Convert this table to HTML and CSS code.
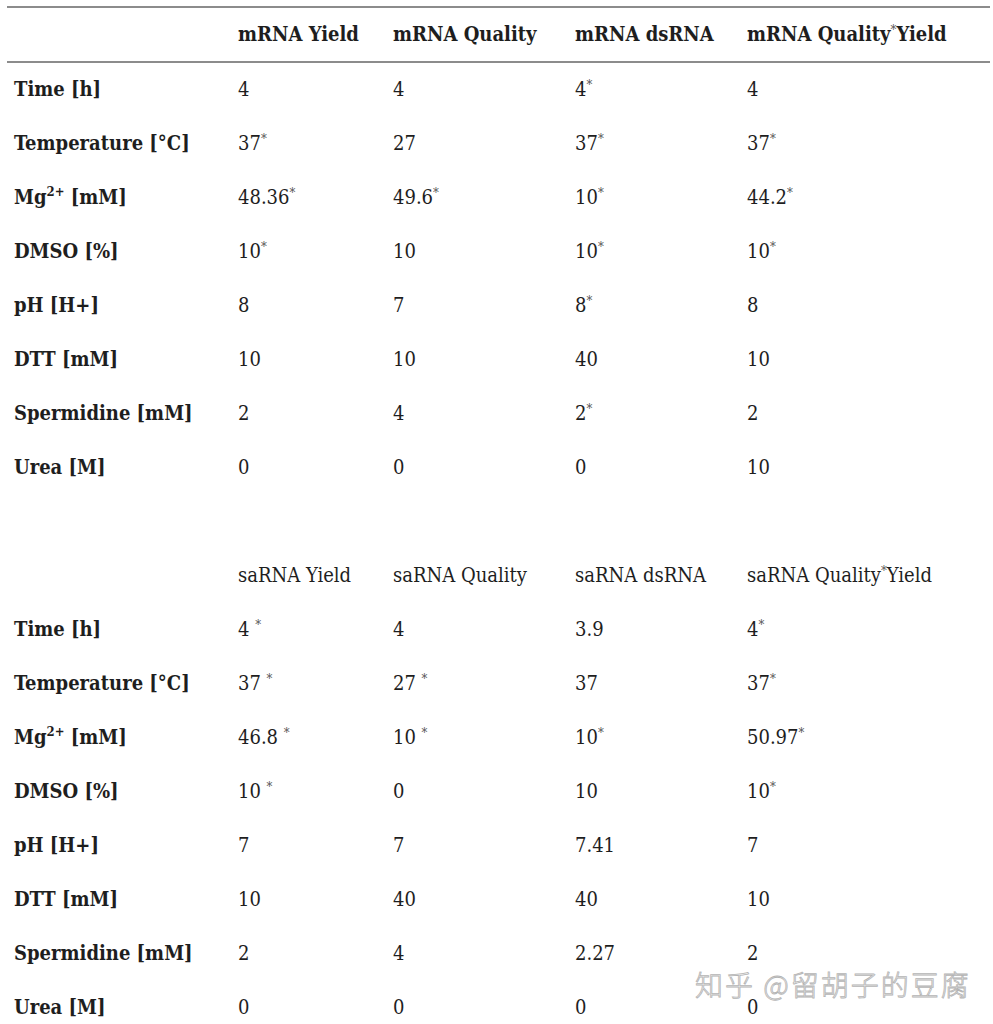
FILE: index.html
```html
<!DOCTYPE html>
<html lang="en">
<head>
<meta charset="utf-8">
<title>Table</title>
<link rel="stylesheet" href="styles.css">
</head>
<body>
<div class="page">
<table class="data lined">
  <colgroup>
    <col class="c0"><col class="c1"><col class="c2"><col class="c3"><col class="c4">
  </colgroup>
  <thead>
    <tr><th></th><th>mRNA Yield</th><th>mRNA Quality</th><th>mRNA dsRNA</th><th>mRNA Quality<sup class="ast">*</sup>Yield</th></tr>
  </thead>
  <tbody>
    <tr><th>Time [h]</th><td>4</td><td>4</td><td>4<sup class="ast">*</sup></td><td>4</td></tr>
    <tr><th>Temperature [°C]</th><td>37<sup class="ast">*</sup></td><td>27</td><td>37<sup class="ast">*</sup></td><td>37<sup class="ast">*</sup></td></tr>
    <tr><th>Mg<sup class="ion">2+</sup> [mM]</th><td>48.36<sup class="ast">*</sup></td><td>49.6<sup class="ast">*</sup></td><td>10<sup class="ast">*</sup></td><td>44.2<sup class="ast">*</sup></td></tr>
    <tr><th>DMSO [%]</th><td>10<sup class="ast">*</sup></td><td>10</td><td>10<sup class="ast">*</sup></td><td>10<sup class="ast">*</sup></td></tr>
    <tr><th>pH [H+]</th><td>8</td><td>7</td><td>8<sup class="ast">*</sup></td><td>8</td></tr>
    <tr><th>DTT [mM]</th><td>10</td><td>10</td><td>40</td><td>10</td></tr>
    <tr><th>Spermidine [mM]</th><td>2</td><td>4</td><td>2<sup class="ast">*</sup></td><td>2</td></tr>
    <tr><th>Urea [M]</th><td>0</td><td>0</td><td>0</td><td>10</td></tr>
  </tbody>
</table>

<table class="data plain">
  <colgroup>
    <col class="c0"><col class="c1"><col class="c2"><col class="c3"><col class="c4">
  </colgroup>
  <thead>
    <tr><th></th><th>saRNA Yield</th><th>saRNA Quality</th><th>saRNA dsRNA</th><th>saRNA Quality<sup class="ast">*</sup>Yield</th></tr>
  </thead>
  <tbody>
    <tr><th>Time [h]</th><td>4 <sup class="ast">*</sup></td><td>4</td><td>3.9</td><td>4<sup class="ast">*</sup></td></tr>
    <tr><th>Temperature [°C]</th><td>37 <sup class="ast">*</sup></td><td>27 <sup class="ast">*</sup></td><td>37</td><td>37<sup class="ast">*</sup></td></tr>
    <tr><th>Mg<sup class="ion">2+</sup> [mM]</th><td>46.8 <sup class="ast">*</sup></td><td>10 <sup class="ast">*</sup></td><td>10<sup class="ast">*</sup></td><td>50.97<sup class="ast">*</sup></td></tr>
    <tr><th>DMSO [%]</th><td>10 <sup class="ast">*</sup></td><td>0</td><td>10</td><td>10<sup class="ast">*</sup></td></tr>
    <tr><th>pH [H+]</th><td>7</td><td>7</td><td>7.41</td><td>7</td></tr>
    <tr><th>DTT [mM]</th><td>10</td><td>40</td><td>40</td><td>10</td></tr>
    <tr><th>Spermidine [mM]</th><td>2</td><td>4</td><td>2.27</td><td>2</td></tr>
    <tr><th>Urea [M]</th><td>0</td><td>0</td><td>0</td><td>0</td></tr>
  </tbody>
</table>

<div class="watermark">知乎 @留胡子的豆腐</div>
</div>
</body>
</html>
```

FILE: styles.css
```css
html, body {
  margin: 0;
  padding: 0;
  background: #ffffff;
}

body {
  font-family: "DejaVu Serif Condensed", "DejaVu Serif", "Liberation Serif", serif;
  font-stretch: condensed;
  color: #1e1e1e;
  overflow: hidden;
  height: 1024px;
}

.page {
  position: relative;
  padding: 6px 3px 0 7px;
}

.data {
  border-collapse: collapse;
  width: 983px;
  table-layout: fixed;
  font-size: 20px;
}

.c0 { width: 224px; }
.c1 { width: 155px; }
.c2 { width: 182px; }
.c3 { width: 172px; }
.c4 { width: 250px; }

.data th,
.data td {
  height: 52px;
  padding: 0 0 2px 7px;
  text-align: left;
  vertical-align: middle;
  white-space: nowrap;
  line-height: 1;
}

.data tbody th {
  font-weight: bold;
}

.data td {
  font-weight: normal;
}

.lined thead th {
  font-weight: bold;
  height: 51px;
  border-top: 2px solid #8c8c8c;
  border-bottom: 2px solid #8c8c8c;
}

.plain {
  margin-top: 54px;
}

.plain thead th {
  font-weight: normal;
}

.ast {
  font-size: 13px;
  line-height: 0;
  vertical-align: 7px;
  color: #555555;
  font-weight: normal;
}

.ion {
  font-size: 13px;
  line-height: 0;
  vertical-align: 8px;
}

.watermark {
  position: absolute;
  left: 695px;
  top: 964px;
  font-family: "Noto Sans CJK SC", sans-serif;
  font-size: 28px;
  font-weight: 300;
  color: #f4f4f4;
  -webkit-text-stroke: 0.8px #b4b4b4;
  letter-spacing: 2px;
  white-space: nowrap;
}
```
